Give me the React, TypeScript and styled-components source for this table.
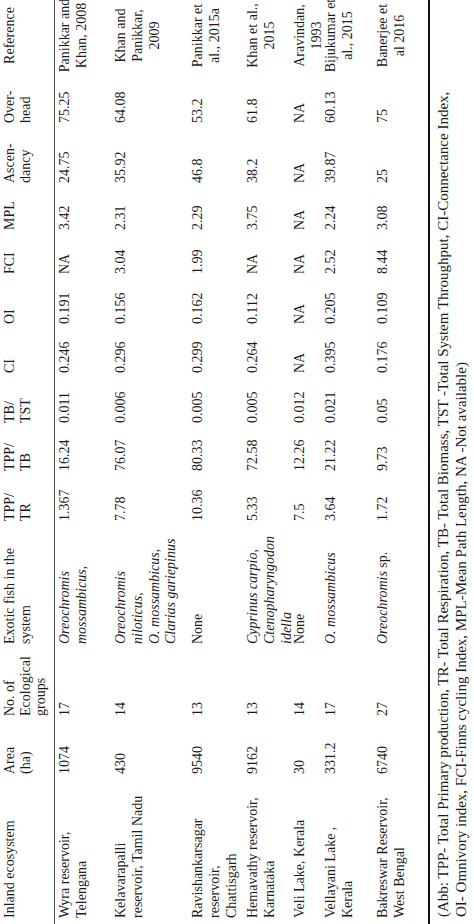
import React from 'react';
import styled, { createGlobalStyle, css } from 'styled-components';

const GlobalStyle = createGlobalStyle`
  html, body {
    margin: 0;
    padding: 0;
    background: #fff;
  }
`;

// column widths of the (unrotated) table, left to right
const COLS = '144px 58px 72px 123px 50px 48px 50px 49px 50px 44px 47px 60px 52px 71px';

const Page = styled.div`
  width: 474px;
  height: 924px;
  overflow: hidden;
  background: #fff;
`;

// the table is printed sideways: build it landscape and turn it a quarter left
const Sheet = styled.div`
  width: 924px;
  height: 474px;
  transform-origin: 0 0;
  transform: translateY(924px) rotate(-90deg);
  display: flex;
  flex-direction: column;
  font-family: "Liberation Serif", "Times New Roman", serif;
  font-size: 14px;
  color: #1c1c1c;
`;

const Row = styled.div<{ $h: number; $head?: boolean }>`
  display: grid;
  grid-template-columns: ${COLS};
  box-sizing: border-box;
  height: ${p => p.$h}px;
  padding: 2px 0 0 6px;
  line-height: 16.8px;
  ${p =>
    p.$head &&
    css`
      line-height: 15.5px;
      border-bottom: 1.5px solid #4d4d4d;
    `}
`;

const Cell = styled.div<{ $center?: boolean }>`
  white-space: nowrap;
  display: flex;
  flex-direction: column;
  align-items: ${p => (p.$center ? 'center' : 'flex-start')};
`;

const Sp = styled.i`
  font-style: italic;
`;

const Footnote = styled.div`
  border-top: 2px solid #111;
  padding: 4px 0 0 7px;
  font-size: 15px;
  line-height: 18px;
  white-space: nowrap;
`;

type Line = React.ReactNode;

const header: Line[][] = [
  ['Inland ecosystem'],
  ['Area', '(ha)'],
  ['No. of', 'Ecological', 'groups'],
  ['Exotic fish in the', 'system'],
  ['TPP/', 'TR'],
  ['TPP/', 'TB'],
  ['TB/', 'TST'],
  ['CI'],
  ['OI'],
  ['FCI'],
  ['MPL'],
  ['Ascen-', 'dancy'],
  ['Over-', 'head'],
  ['Reference'],
];

type DataRow = { h: number; cells: Line[][] };

const rows: DataRow[] = [
  {
    h: 56,
    cells: [
      ['Wyra reservoir,', 'Telengana'],
      ['1074'],
      ['17'],
      [<Sp key="a">Oreochromis</Sp>, <Sp key="b">mossambicus,</Sp>],
      ['1.367'], ['16.24'], ['0.011'], ['0.246'], ['0.191'], ['NA'], ['3.42'], ['24.75'], ['75.25'],
      ['Panikkar and', 'Khan, 2008'],
    ],
  },
  {
    h: 77,
    cells: [
      ['Kelavarapalli', 'reservoir, Tamil Nadu'],
      ['430'],
      ['14'],
      [
        <Sp key="a">Oreochromis</Sp>,
        <Sp key="b">niloticus,</Sp>,
        <Sp key="c">O. mossambicus,</Sp>,
        <Sp key="d">Clarias gariepinus</Sp>,
      ],
      ['7.78'], ['76.07'], ['0.006'], ['0.296'], ['0.156'], ['3.04'], ['2.31'], ['35.92'], ['64.08'],
      ['Khan and', 'Panikkar,', '2009'],
    ],
  },
  {
    h: 55,
    cells: [
      ['Ravishankarsagar', 'reservoir,', 'Chattisgarh'],
      ['9540'],
      ['13'],
      ['None'],
      ['10.36'], ['80.33'], ['0.005'], ['0.299'], ['0.162'], ['1.99'], ['2.29'], ['46.8'], ['53.2'],
      ['Panikkar et', 'al., 2015a'],
    ],
  },
  {
    h: 47,
    cells: [
      ['Hemavathy reservoir,', 'Karnataka'],
      ['9162'],
      ['13'],
      [<Sp key="a">Cyprinus carpio,</Sp>, <Sp key="b">Ctenopharyngodon</Sp>, <Sp key="c">idella</Sp>],
      ['5.33'], ['72.58'], ['0.005'], ['0.264'], ['0.112'], ['NA'], ['3.75'], ['38.2'], ['61.8'],
      ['Khan et al.,', '2015'],
    ],
  },
  {
    h: 31,
    cells: [
      ['Veli Lake, Kerala'],
      ['30'],
      ['14'],
      ['None'],
      ['7.5'], ['12.26'], ['0.012'], ['NA'], ['NA'], ['NA'], ['NA'], ['NA'], ['NA'],
      ['Aravindan,', '1993'],
    ],
  },
  {
    h: 52,
    cells: [
      ['Vellayani Lake ,', 'Kerala'],
      ['331.2'],
      ['17'],
      [<Sp key="a">O. mossambicus</Sp>],
      ['3.64'], ['21.22'], ['0.021'], ['0.395'], ['0.205'], ['2.52'], ['2.24'], ['39.87'], ['60.13'],
      ['Bijukumar et', 'al., 2015'],
    ],
  },
  {
    h: 55,
    cells: [
      ['Bakreswar Reservoir,', 'West Bengal'],
      ['6740'],
      ['27'],
      [<span key="a"><Sp>Oreochromis</Sp> sp.</span>],
      ['1.72'], ['9.73'], ['0.05'], ['0.176'], ['0.109'], ['8.44'], ['3.08'], ['25'], ['75'],
      ['Banerjee et', 'al 2016'],
    ],
  },
];

const renderCells = (cells: Line[][]) =>
  cells.map((lines, i) => (
    <Cell key={i} $center={i === cells.length - 1}>
      {lines.map((l, j) => (
        <div key={j}>{l}</div>
      ))}
    </Cell>
  ));

const App = () => {
  return (
    <Page>
      <GlobalStyle />
      <Sheet>
        <Row $h={55} $head>
          {renderCells(header)}
        </Row>
        {rows.map((r, i) => (
          <Row key={i} $h={r.h}>
            {renderCells(r.cells)}
          </Row>
        ))}
        <Footnote>
          <div>
            (Abb: TPP- Total Primary production, TR- Total Respiration, TB- Total Biomass, TST -Total System
            Throughput, CI-Connectance Index,
          </div>
          <div>OI- Omnivory index, FCI-Finns cycling Index, MPL-Mean Path Length, NA -Not available)</div>
        </Footnote>
      </Sheet>
    </Page>
  );
};

export default App;
